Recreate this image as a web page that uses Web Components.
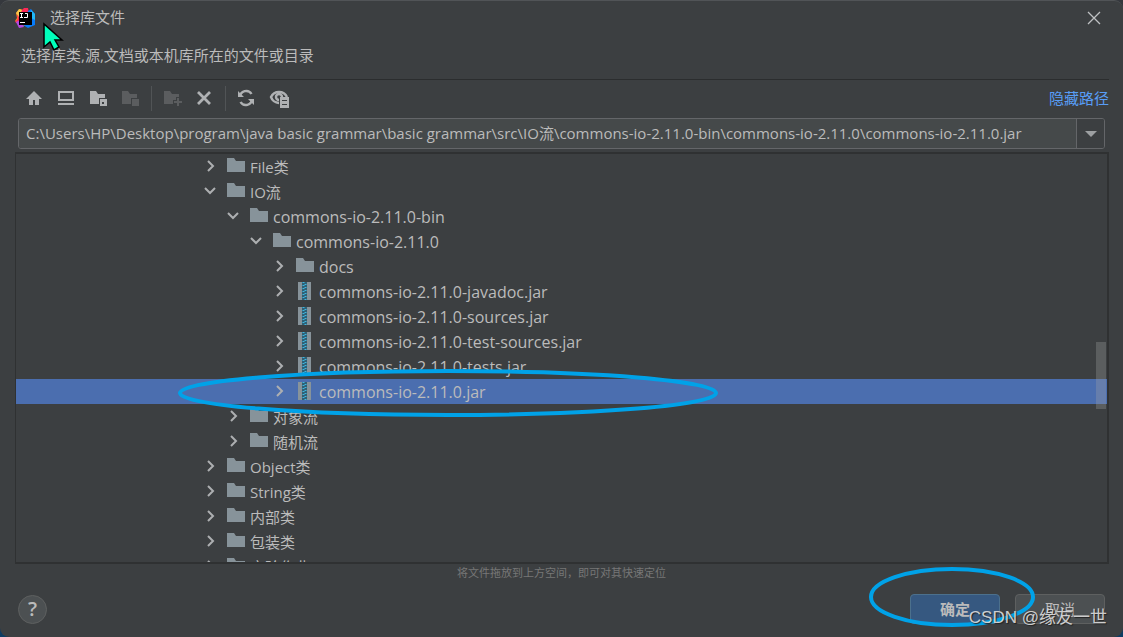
<!DOCTYPE html>
<html lang="zh-CN">
<head>
<meta charset="utf-8">
<meta name="viewport" content="width=device-width, initial-scale=1">
<title>选择库文件</title>
<style>
  html,
  body {
    height: 100%;
    margin: 0;
  }
  body {
    background: linear-gradient(#35383d 50%, #0d3c63 50%);
    font-family: "Open Sans", "Noto Sans CJK SC", sans-serif;
    font-size: 15px;
    color: #bbbbbb;
    overflow: hidden;
  }
</style>
</head>
<body>
<library-dialog></library-dialog>

<script>
class UiIcon extends HTMLElement {
  static shapes = {
    home: '<path fill="#afb1b3" d="M8 1 0 9h3v6h4v-5h2v5h4V9h3z"/>',
    desktop: '<path fill="#afb1b3" fill-rule="evenodd" d="M0 1h16v10H0zM2 3v6h12V3zM0 13h16v2H0z"/>',
    project: '<path fill="#afb1b3" d="M0 1h6l2 3h7v4H9v6H0z"/><path fill="#afb1b3" fill-rule="evenodd" d="M10 9h7v7h-7zM12 12v2h2v-2z"/>',
    module: '<path fill="#5b5d5f" d="M0 1h6l2 3h7v4H9v6H0zM10 9h7v7h-7z"/>',
    create: '<path fill="#5b5d5f" d="M0 1h6l2 3h7v3h-3v3H9v4H0zM13 8h2v3h3v2h-3v3h-2v-3h-3v-2h3z"/>',
    remove: '<path stroke="#afb1b3" stroke-width="2.8" d="m2 2 12 12M14 2 2 14"/>',
    refresh: '<path fill="none" stroke="#afb1b3" stroke-width="2.4" d="M2 7a6.200 6.200 0 0 1 11.500-3M14 9a6.200 6.200 0 0 1-11.500 3"/><path fill="#afb1b3" d="M0 1v6h6zM16 15V9h-6z"/>',
    hidden: '<path fill="none" stroke="#afb1b3" stroke-width="2.4" d="M9 13C5 13 2 10 1 7c1.400-3 4.300-5 8-5s6.600 2 8 5"/><path fill="none" stroke="#afb1b3" stroke-width="2.4" d="M9 10a3 3 0 1 1 3-3"/><path fill="#afb1b3" fill-rule="evenodd" d="M10 7h9v11h-9zM12 10v1h5v-1zM12 14v1h5v-1z"/>',
    close: '<path stroke="#bfc1c3" stroke-width="1.300" d="m2 2 12 12M14 2 2 14"/>',
    right: '<path fill="none" stroke="#adafb1" stroke-width="2" d="m6 3 5 5-5 5"/>',
    down: '<path fill="none" stroke="#adafb1" stroke-width="2" d="m3 5 5 5 5-5"/>',
    triangle: '<path fill="#9da0a2" d="M2 5h12l-6 6z"/>',
    folder: '<path fill="#87939a" d="M0 1h7l2 3h9v11H0z"/>',
    jar: '<path fill="#87939a" d="M2 0h4v18H2zM11 0h4v18h-4z"/><path fill="#2f6075" d="M6 0h5v18H6z"/><path stroke="#40b6e0" stroke-width="2" stroke-dasharray="1 2" d="M7.500 0v18"/><path stroke="#40b6e0" stroke-width="2" stroke-dasharray="1 2" stroke-dashoffset="1" d="M9.500 0v18"/>'
  };

  constructor() {
    super();
    this.attachShadow({ mode: 'open' });
  }

  connectedCallback() {
    const size = Number(this.getAttribute('size')) || 16;
    this.shadowRoot.innerHTML = `
      <style>
        :host {
          display: block;
          flex: none;
          width: ${size}px;
          height: ${size}px;
        }
        svg {
          display: block;
          overflow: visible;
        }
      </style>
      <svg width="${size}" height="${size}" viewBox="0 0 ${size} ${size}" aria-hidden="true">
        ${UiIcon.shapes[this.getAttribute('name')]}
      </svg>
    `;
  }
}

class TitleBar extends HTMLElement {
  constructor() {
    super();
    this.attachShadow({ mode: 'open' });
    this.shadowRoot.innerHTML = `
      <style>
        :host {
          display: flex;
          align-items: center;
          height: 34px;
          padding: 0 21px 0 15px;
        }
        h1 {
          flex: 1;
          margin: 0 0 0 14px;
          padding-bottom: 2px;
          font-size: 15px;
          font-weight: 400;
          line-height: 20px;
        }
        button {
          padding: 0;
          border: 0;
          background: none;
        }
      </style>
      <svg width="21" height="20" viewBox="0 0 21 20" aria-hidden="true">
        <path fill="#fc801d" d="m1 5 4-4 7 2-2 15-6-1-4-4 2-3z"/>
        <path fill="#fe2857" d="M9 0h4l1 5-8 12-6-3 3-3-1-4z"/>
        <path fill="#f7c64a" d="m1 5 3-4 3 1-3 7z"/>
        <path fill="#b24ae0" d="m1 14 4-2 4 7-5 1z"/>
        <path fill="#087cfa" d="m13 3 3-2 4 5v11l-7 3-5-3z"/>
        <path fill="#21b8f5" d="m16 2 4 4v6l-4-2z"/>
        <path d="M4 4h13v13H4z"/>
        <path fill="none" stroke="#fff" d="M5 5.500h3M6.500 5v5M5 9.500h3M10 5.500h2.500v4H9M5 14.500h5"/>
      </svg>
      <h1><slot></slot></h1>
      <button type="button" aria-label="关闭"><ui-icon name="close"></ui-icon></button>
    `;
  }
}

class ToolButton extends HTMLElement {
  constructor() {
    super();
    this.attachShadow({ mode: 'open' });
  }

  connectedCallback() {
    this.shadowRoot.innerHTML = `
      <style>
        :host {
          display: block;
        }
        button {
          display: grid;
          place-items: center;
          width: 32px;
          height: 32px;
          padding: 0;
          border: 0;
          background: none;
        }
      </style>
      <button type="button" aria-label="${this.getAttribute('label')}" ${this.hasAttribute('disabled') ? 'disabled' : ''}>
        <ui-icon name="${this.getAttribute('icon')}"></ui-icon>
      </button>
    `;
  }
}

class ToolBar extends HTMLElement {
  constructor() {
    super();
    this.attachShadow({ mode: 'open' });
    this.shadowRoot.innerHTML = `
      <style>
        :host {
          display: flex;
          align-items: center;
          height: 36px;
          margin: 0 14px 0 15px;
          padding: 0 0 2px 3px;
          border-top: 1px solid #2b2d2e;
        }
        .separator {
          width: 1px;
          height: 25px;
          margin: 0 4px 0 5px;
          background: #515456;
        }
        a {
          margin-left: auto;
          padding-bottom: 2px;
          color: #589df6;
          text-decoration: none;
        }
      </style>
      <tool-button icon="home" label="主目录"></tool-button>
      <tool-button icon="desktop" label="桌面目录"></tool-button>
      <tool-button icon="project" label="项目目录"></tool-button>
      <tool-button icon="module" label="模块目录" disabled></tool-button>
      <span class="separator"></span>
      <tool-button icon="create" label="新建文件夹" disabled></tool-button>
      <tool-button icon="remove" label="删除"></tool-button>
      <span class="separator"></span>
      <tool-button icon="refresh" label="刷新"></tool-button>
      <tool-button icon="hidden" label="显示隐藏文件"></tool-button>
      <a href="#path">隐藏路径</a>
    `;
  }
}

class PathField extends HTMLElement {
  constructor() {
    super();
    this.attachShadow({ mode: 'open' });
  }

  connectedCallback() {
    this.shadowRoot.innerHTML = `
      <style>
        :host {
          display: flex;
          box-sizing: border-box;
          height: 31px;
          margin: 0 18px 3px;
          border: 1px solid #646669;
          border-radius: 3px;
          overflow: hidden;
        }
        input {
          flex: 1;
          min-width: 0;
          padding: 0 7px 2px;
          border: 0;
          outline: 0;
          background: #45494a;
          color: inherit;
          font: inherit;
        }
        button {
          display: grid;
          place-items: center;
          width: 28px;
          padding: 0;
          border: 0;
          border-left: 1px solid #646669;
          background: #3c3f41;
        }
      </style>
      <input type="text" aria-label="路径" value="${this.getAttribute('value')}">
      <button type="button" aria-label="历史路径"><ui-icon name="triangle"></ui-icon></button>
    `;
  }
}

class TreeRow extends HTMLElement {
  constructor() {
    super();
    this.attachShadow({ mode: 'open' });
  }

  connectedCallback() {
    const open = this.hasAttribute('open');
    this.setAttribute('role', 'treeitem');
    this.setAttribute('aria-expanded', open);
    this.shadowRoot.innerHTML = `
      <style>
        :host {
          display: flex;
          align-items: center;
          box-sizing: border-box;
          height: 25px;
          padding: 0 0 2px calc(186px + 23px * ${this.getAttribute('level')});
          white-space: nowrap;
        }
        :host([lang="en"]) {
          font-size: 16px;
        }
        :host([selected]) {
          background: #4b6eaf;
        }
        button {
          margin-right: 9px;
          padding: 0;
          border: 0;
          background: none;
        }
        span {
          margin-left: 5px;
          padding-top: 2px;
        }
      </style>
      <button type="button" tabindex="-1" aria-label="${open ? '折叠' : '展开'}">
        <ui-icon name="${open ? 'down' : 'right'}"></ui-icon>
      </button>
      <ui-icon name="${this.getAttribute('icon') || 'folder'}" size="18"></ui-icon>
      <span><slot></slot></span>
    `;
  }
}

class FileTree extends HTMLElement {
  constructor() {
    super();
    this.attachShadow({ mode: 'open' });
    this.shadowRoot.innerHTML = `
      <style>
        :host {
          display: block;
          position: relative;
          min-height: 0;
          margin: 0 14px 0 15px;
          border: 1px solid #2f3132;
          border-width: 2px 2px 2px 1px;
        }
        .rows {
          height: 100%;
          overflow: hidden;
        }
        .thumb {
          position: absolute;
          top: 46%;
          right: 1px;
          width: 10px;
          height: 67px;
          background: rgba(166, 166, 166, 0.3);
        }
      </style>
      <div class="rows" role="tree" aria-label="文件"><slot></slot></div>
      <div class="thumb"></div>
    `;
  }
}

class PushButton extends HTMLElement {
  constructor() {
    super();
    this.attachShadow({ mode: 'open' });
    this.shadowRoot.innerHTML = `
      <style>
        :host {
          display: block;
        }
        button {
          width: 90px;
          height: 30px;
          padding: 0 0 2px;
          border: 1px solid #5e6060;
          border-radius: 4px;
          background: #4c5052;
          color: inherit;
          font: inherit;
        }
        :host([primary]) button {
          border-color: #4c708c;
          background: #365880;
          font-weight: 700;
        }
      </style>
      <button type="button"><slot></slot></button>
    `;
  }
}

class DialogFooter extends HTMLElement {
  constructor() {
    super();
    this.attachShadow({ mode: 'open' });
    this.shadowRoot.innerHTML = `
      <style>
        :host {
          display: flex;
          align-items: center;
          gap: 15px;
          height: 32px;
          padding: 0 18px 12px;
        }
        .help {
          width: 29px;
          height: 29px;
          margin-right: auto;
          padding: 0;
          border: 1px solid #5e6060;
          border-radius: 50%;
          background: #4c5052;
          color: #bbbbbb;
          font: 600 20px/20px "Open Sans", sans-serif;
        }
      </style>
      <button class="help" type="button" aria-label="帮助">?</button>
      <push-button primary>确定</push-button>
      <push-button>取消</push-button>
    `;
  }
}

// Pen marks, pointer and signature drawn over the window.
class MarkLayer extends HTMLElement {
  constructor() {
    super();
    this.attachShadow({ mode: 'open' });
    this.shadowRoot.innerHTML = `
      <style>
        :host {
          position: absolute;
          inset: 0;
          overflow: hidden;
          pointer-events: none;
        }
        svg,
        span {
          position: absolute;
        }
        .row-mark {
          left: 177px;
          top: 367px;
        }
        .ok-mark {
          right: 88px;
          bottom: 9px;
        }
        .pointer {
          left: 41px;
          top: 20px;
        }
        span {
          right: 16px;
          bottom: 6px;
          color: rgba(225, 225, 225, 0.9);
          font: 17px/26px "Liberation Sans", "Noto Sans CJK SC", sans-serif;
          text-shadow: 1px 1px 1px #222;
        }
      </style>
      <svg class="row-mark" width="544" height="50" aria-hidden="true">
        <ellipse cx="271" cy="25" rx="268" ry="22" fill="none" stroke="#00a2e8" stroke-width="4"/>
      </svg>
      <svg class="ok-mark" width="166" height="62" aria-hidden="true">
        <ellipse cx="83" cy="31" rx="81" ry="28" fill="none" stroke="#00a2e8" stroke-width="4"/>
      </svg>
      <svg class="pointer" width="24" height="30" aria-hidden="true">
        <path fill="#0fb" stroke="#000" stroke-width="1.500" d="M3 3v23l6-5 4 8 5-3-4-7h7z"/>
      </svg>
      <span>CSDN @缘友一世</span>
    `;
  }
}

class LibraryDialog extends HTMLElement {
  constructor() {
    super();
    this.attachShadow({ mode: 'open' });
    this.shadowRoot.innerHTML = `
      <style>
        :host {
          display: grid;
          grid-template-rows: auto auto auto auto 1fr auto auto;
          position: relative;
          box-sizing: border-box;
          height: 100vh;
          border-top: 1px solid #515457;
          border-radius: 9px;
          background: #3c3f41;
          overflow: hidden;
        }
        .prompt {
          height: 44px;
          margin: 0;
          padding-left: 21px;
          line-height: 40px;
        }
        .hint {
          margin: 0;
          height: 29px;
          color: #777777;
          font-size: 11px;
          line-height: 18px;
          text-align: center;
        }
      </style>
      <title-bar>选择库文件</title-bar>
      <p class="prompt">选择库类,源,文档或本机库所在的文件或目录</p>
      <tool-bar></tool-bar>
      <path-field value="C:\\Users\\HP\\Desktop\\program\\java basic grammar\\basic grammar\\src\\IO流\\commons-io-2.11.0-bin\\commons-io-2.11.0\\commons-io-2.11.0.jar"></path-field>
      <file-tree>
        <tree-row level="0">File类</tree-row>
        <tree-row level="0" open>IO流</tree-row>
        <tree-row level="1" open lang="en">commons-io-2.11.0-bin</tree-row>
        <tree-row level="2" open lang="en">commons-io-2.11.0</tree-row>
        <tree-row level="3" lang="en">docs</tree-row>
        <tree-row level="3" icon="jar" lang="en">commons-io-2.11.0-javadoc.jar</tree-row>
        <tree-row level="3" icon="jar" lang="en">commons-io-2.11.0-sources.jar</tree-row>
        <tree-row level="3" icon="jar" lang="en">commons-io-2.11.0-test-sources.jar</tree-row>
        <tree-row level="3" icon="jar" lang="en">commons-io-2.11.0-tests.jar</tree-row>
        <tree-row level="3" icon="jar" lang="en" selected>commons-io-2.11.0.jar</tree-row>
        <tree-row level="1">对象流</tree-row>
        <tree-row level="1">随机流</tree-row>
        <tree-row level="0">Object类</tree-row>
        <tree-row level="0">String类</tree-row>
        <tree-row level="0">内部类</tree-row>
        <tree-row level="0">包装类</tree-row>
        <tree-row level="0">实验作业</tree-row>
      </file-tree>
      <p class="hint">将文件拖放到上方空间，即可对其快速定位</p>
      <dialog-footer></dialog-footer>
      <mark-layer></mark-layer>
    `;
  }
}

customElements.define('ui-icon', UiIcon);
customElements.define('title-bar', TitleBar);
customElements.define('tool-button', ToolButton);
customElements.define('tool-bar', ToolBar);
customElements.define('path-field', PathField);
customElements.define('tree-row', TreeRow);
customElements.define('file-tree', FileTree);
customElements.define('push-button', PushButton);
customElements.define('dialog-footer', DialogFooter);
customElements.define('mark-layer', MarkLayer);
customElements.define('library-dialog', LibraryDialog);
</script>
</body>
</html>
